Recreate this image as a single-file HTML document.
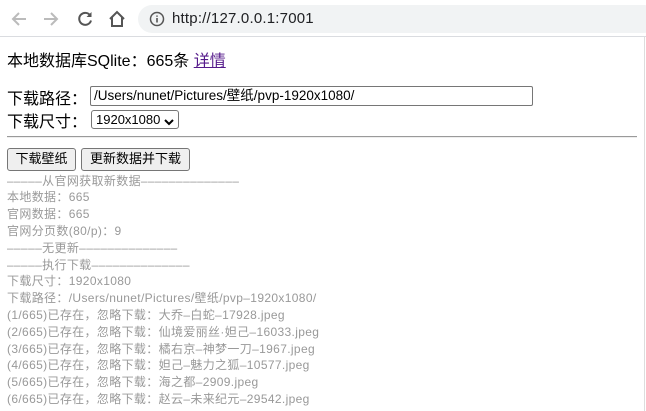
<!DOCTYPE html>
<html><head><meta charset="utf-8"><style>
*{margin:0;padding:0;box-sizing:border-box}
html,body{width:646px;height:411px;overflow:hidden;background:#fff;font-family:"Liberation Sans","Noto Sans CJK SC",sans-serif;color:#000}
.bar{position:absolute;left:0;top:0;width:646px;height:37px;background:#fff;border-bottom:1px solid #dadce0}
.addr{position:absolute;left:138px;top:5px;width:520px;height:28px;background:#f1f3f4;border-radius:14px}
.url{position:absolute;left:172px;top:10px;font-size:15px;color:#202124;letter-spacing:0.2px}
.t{position:absolute;left:7px;top:47px;font-size:16px}
.t a{color:#551a8b;text-decoration:underline}
.lab{position:absolute;left:7px;font-size:16px}
.inp{position:absolute;left:90px;top:86px;width:443px;height:20px;border:1px solid #767676;border-radius:2px;font-size:13.5px;padding:1px 3px;line-height:16px}
.sel{position:absolute;left:91px;top:110px;width:88px;height:19px;border:1px solid #767676;border-radius:3px;font-size:13px;padding:1px 4px;line-height:15px}
.hr{position:absolute;left:7px;top:136px;width:630px;height:2px;border-top:1px solid #9a9a9a;border-bottom:1px solid #eee}
.btn{position:absolute;top:148px;height:23px;border:1px solid #767676;border-radius:3px;background:#efefef;font-size:13px;line-height:20px;text-align:center}
.log{position:absolute;left:7px;top:172.6px;font-size:12px;line-height:16.8px;color:#999;white-space:pre;letter-spacing:0.35px}
.edge{position:absolute;left:644px;top:37px;width:1px;height:374px;background:#ddd}
</style></head><body>
<div class="bar">
<svg style="position:absolute;left:10px;top:10px" width="18" height="18" viewBox="0 0 18 18"><path d="M16 9H3M9 3L3 9l6 6" stroke="#bbb" stroke-width="2" fill="none"/></svg>
<svg style="position:absolute;left:42px;top:10px" width="18" height="18" viewBox="0 0 18 18"><path d="M2 9h13M9 3l6 6-6 6" stroke="#bbb" stroke-width="2" fill="none"/></svg>
<svg style="position:absolute;left:76px;top:10px" width="18" height="18" viewBox="0 0 18 18"><path d="M14.5 6A6 6 0 1 0 15 10.5" stroke="#555" stroke-width="2" fill="none"/><path d="M15.5 2v5h-5z" fill="#555"/></svg>
<svg style="position:absolute;left:107px;top:9px" width="20" height="20" viewBox="0 0 20 20"><path d="M3 10L10 3l7 7M5 8.5V17h10V8.5" stroke="#555" stroke-width="2" fill="none"/></svg>
<div class="addr"></div>
<svg style="position:absolute;left:149px;top:11px" width="16" height="16" viewBox="0 0 16 16"><circle cx="8" cy="8" r="6.5" stroke="#555" stroke-width="1.5" fill="none"/><path d="M8 7v4.5M8 4.5v1.3" stroke="#555" stroke-width="1.6"/></svg>
<div class="url">http://127.0.0.1:7001</div>
</div>
<div class="edge"></div>
<div class="t">本地数据库SQlite：665条 <a>详情</a></div>
<div class="lab" style="top:85px">下载路径：</div>
<div class="lab" style="top:108px">下载尺寸：</div>
<div class="inp">/Users/nunet/Pictures/壁纸/pvp-1920x1080/</div>
<div class="sel">1920x1080 <span style="position:absolute;right:4px;top:3px"><svg width="10" height="8" viewBox="0 0 10 8"><path d="M1 2l4 4 4-4" stroke="#000" stroke-width="2" fill="none"/></svg></span></div>
<div class="hr"></div>
<div class="btn" style="left:7px;width:69px">下载壁纸</div>
<div class="btn" style="left:81px;width:109px">更新数据并下载</div>
<div class="log">–––––从官网获取新数据––––––––––––––
本地数据：665
官网数据：665
官网分页数(80/p)：9
–––––无更新––––––––––––––
–––––执行下载––––––––––––––
下载尺寸：1920x1080
下载路径：/Users/nunet/Pictures/壁纸/pvp–1920x1080/
(1/665)已存在，忽略下载：大乔–白蛇–17928.jpeg
(2/665)已存在，忽略下载：仙境爱丽丝·妲己–16033.jpeg
(3/665)已存在，忽略下载：橘右京–神梦一刀–1967.jpeg
(4/665)已存在，忽略下载：妲己–魅力之狐–10577.jpeg
(5/665)已存在，忽略下载：海之都–2909.jpeg
(6/665)已存在，忽略下载：赵云–未来纪元–29542.jpeg</div>
</body></html>
